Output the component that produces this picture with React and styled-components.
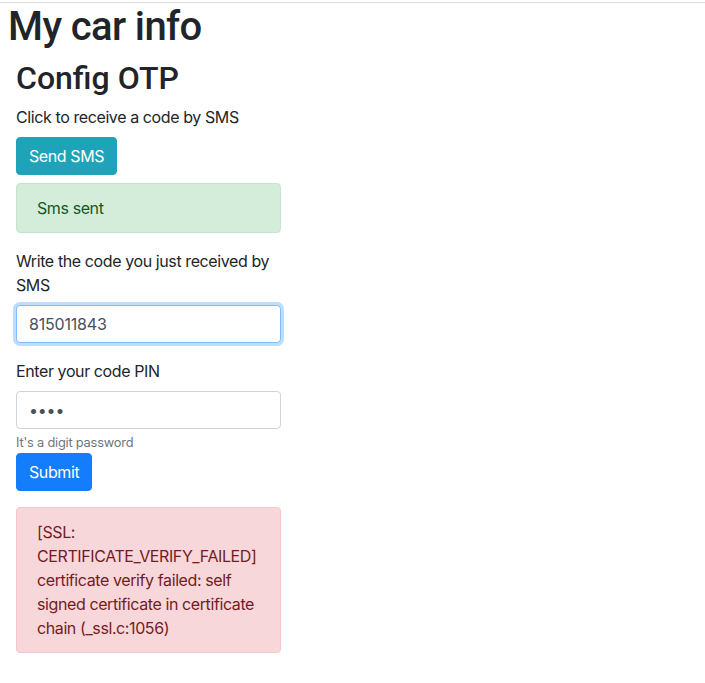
import React from "react";
import styled, { createGlobalStyle } from "styled-components";

const Global = createGlobalStyle`
  *, *::before, *::after { box-sizing: border-box; }
  html, body { margin: 0; padding: 0; background: #fff; }
  body {
    font-family: Inter, "Liberation Sans", Arial, sans-serif;
    font-size: 16px;
    line-height: 1.5;
    letter-spacing: -0.4px;
    color: #212529;
  }
`;

const TopRule = styled.div`
  height: 1px;
  margin-top: 2px;
  background: #dedede;
`;

const Page = styled.div`
  padding: 0 8px;
`;

const Title = styled.h1`
  margin: 0 0 8px;
  font-family: Roboto, "Liberation Sans", sans-serif;
  font-size: 40px;
  font-weight: 500;
  line-height: 1.2;
  letter-spacing: -0.6px;
`;

const Panel = styled.div`
  width: 265px;
  margin-left: 8px;
`;

const Subtitle = styled.h2`
  margin: 0 0 8px;
  font-family: Roboto, "Liberation Sans", sans-serif;
  font-size: 32px;
  font-weight: 500;
  line-height: 1.2;
  letter-spacing: 0;
`;

const Text = styled.p`
  margin: 4px 0 8px;
`;

const Button = styled.button`
  display: inline-block;
  font-family: inherit;
  font-size: 16px;
  line-height: 24px;
  letter-spacing: -0.4px;
  padding: 6px 12px;
  border: 1px solid ${(p) => p.$bg};
  border-radius: 4px;
  background: ${(p) => p.$bg};
  color: #fff;
  cursor: pointer;
`;

const Alert = styled.div`
  margin: ${(p) => p.$mt || 0}px 0 16px;
  padding: 12px 20px;
  border: 1px solid ${(p) => p.$border};
  border-radius: 4px;
  background: ${(p) => p.$bg};
  color: ${(p) => p.$fg};
`;

const Group = styled.div`
  margin-bottom: 16px;
`;

const Label = styled.label`
  display: block;
  margin-bottom: 8px;
`;

const Input = styled.input`
  display: block;
  width: 100%;
  height: 38px;
  padding: 6px 12px;
  font-family: inherit;
  font-size: 16px;
  line-height: 24px;
  letter-spacing: -0.2px;
  color: #495057;
  background: #fff;
  border: 1px solid ${(p) => (p.$focus ? "#80bdff" : "#ced4da")};
  border-radius: 4px;
  outline: none;
  box-shadow: ${(p) => (p.$focus ? "0 0 0 3px rgba(0,123,255,.25)" : "none")};
`;

const Hint = styled.small`
  display: block;
  margin-top: 4px;
  font-size: 12.8px;
  line-height: 1.5;
  letter-spacing: -0.2px;
  color: #6c757d;
`;

export default function App() {
  return (
    <>
      <Global />
      <TopRule />
      <Page>
        <Title>My car info</Title>
        <Panel>
          <Subtitle>Config OTP</Subtitle>
          <Text>Click to receive a code by SMS</Text>
          <Button $bg="#1fa3b8">Send SMS</Button>
          <Alert $mt={8} $bg="#d4edda" $border="#c3e6cb" $fg="#155724">
            Sms sent
          </Alert>
          <Group>
            <Label>Write the code you just received by SMS</Label>
            <Input $focus defaultValue="815011843" />
          </Group>
          <Group>
            <Label>Enter your code PIN</Label>
            <Input type="password" defaultValue="1234" />
            <Hint>It's a digit password</Hint>
            <Button $bg="#137dfc">Submit</Button>
          </Group>
          <Alert $bg="#f8d7da" $border="#f5c6cb" $fg="#721c24">
            [SSL: CERTIFICATE_VERIFY_FAILED] certificate verify failed: self
            signed certificate in certificate chain (_ssl.c:1056)
          </Alert>
        </Panel>
      </Page>
    </>
  );
}
